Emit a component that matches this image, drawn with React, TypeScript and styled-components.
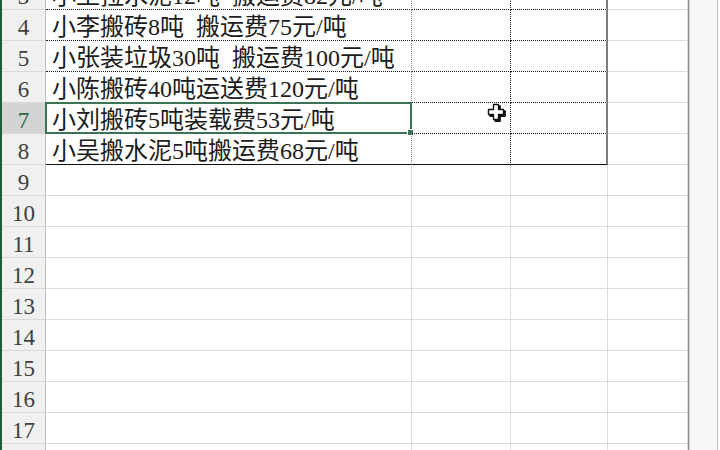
import React from 'react';
import styled, { createGlobalStyle, css } from 'styled-components';

const GlobalStyle = createGlobalStyle`
  html, body { margin: 0; padding: 0; background: #ffffff; overflow: hidden; }
  #root { width: 720px; height: 450px; }
`;

const GREEN = '#3b7454';

const Window = styled.div`
  display: flex;
  width: 720px;
  height: 450px;
  overflow: hidden;
  background: #ffffff;
`;

const EdgeStrip = styled.div`
  flex: none;
  width: 2px;
  background: #1f5c3b;
`;

const Sheet = styled.div`
  flex: none;
  width: 686px;
  height: 450px;
  overflow: hidden;
`;

const Rows = styled.div`
  display: flex;
  flex-direction: column;
  margin-top: -21px;
`;

const Row = styled.div`
  flex: none;
  display: grid;
  grid-template-columns: 44px 366px 99px 97px 80px;
  height: 31px;
`;

const RowHeader = styled.div<{ $active?: boolean }>`
  box-sizing: border-box;
  display: flex;
  align-items: center;
  justify-content: center;
  padding-top: 4px;
  background: ${(p) => (p.$active ? '#d4d4d4' : '#f0f0f0')};
  color: ${(p) => (p.$active ? '#2a6a47' : '#404040')};
  border-bottom: 1px solid #d9d9d9;
  border-right: 1px solid #bdbdbd;
  font-family: 'Liberation Serif', 'Times New Roman', serif;
  font-size: 23px;
  line-height: 1;
`;

type Bottom = 'dotted' | 'solid' | 'grid';
type Right = 'pagebreak' | 'dotted' | 'edge' | 'grid';

const bottomStyles: Record<Bottom, ReturnType<typeof css>> = {
  dotted: css`border-bottom: 1px dotted #1a1a1a;`,
  solid: css`border-bottom: 1px solid #111111;`,
  grid: css`border-bottom: 1px solid #dcdcdc;`,
};

const rightStyles: Record<Right, ReturnType<typeof css>> = {
  pagebreak: css`border-right: 1px dotted #8c8c8c;`,
  dotted: css`border-right: 1px dotted #1a1a1a;`,
  edge: css`border-right: 2px solid #7d7d7d;`,
  grid: css`border-right: 1px solid #dcdcdc;`,
};

const Cell = styled.div<{ $bottom: Bottom; $right: Right }>`
  position: relative;
  box-sizing: border-box;
  display: flex;
  align-items: center;
  padding: 3px 0 0 6px;
  white-space: nowrap;
  font-family: 'Liberation Serif', 'Noto Sans CJK SC', serif;
  font-size: 24px;
  line-height: 1;
  word-spacing: 6px;
  color: #1c1c1c;
  ${(p) => bottomStyles[p.$bottom]}
  ${(p) => rightStyles[p.$right]}
`;

const Selection = styled.div`
  position: absolute;
  left: -1px;
  top: -1px;
  right: -1px;
  bottom: -1px;
  border: 2px solid ${GREEN};
  pointer-events: none;
`;

const FillHandle = styled.div`
  position: absolute;
  right: -4px;
  bottom: -4px;
  width: 5px;
  height: 5px;
  background: ${GREEN};
  border: 1px solid #ffffff;
`;

const CursorWrap = styled.div`
  position: absolute;
  left: 74px;
  top: -1px;
  width: 22px;
  height: 22px;
`;

const ScrollTrack = styled.div`
  flex: none;
  width: 32px;
  box-sizing: border-box;
  display: flex;
  border-left: 1px solid #8f8f8f;
`;

const TrackInner = styled.div`
  flex: 1;
  border-left: 1px solid #cfcfcf;
  border-right: 1px solid #c2c2c2;
  background: #f8f8f8;
  margin-right: 2px;
`;

const texts: Record<number, string> = {
  3: '小王拉水泥12吨 搬运费82元/吨',
  4: '小李搬砖8吨 搬运费75元/吨',
  5: '小张装垃圾30吨 搬运费100元/吨',
  6: '小陈搬砖40吨运送费120元/吨',
  7: '小刘搬砖5吨装载费53元/吨',
  8: '小吴搬水泥5吨搬运费68元/吨',
};

const CrossCursor = () => (
  <CursorWrap>
    <svg width="22" height="22" viewBox="0 0 22 22">
      <path
        d="M7.5 2.5h5v5h5v5h-5v5h-5v-5h-5v-5h5z"
        transform="translate(1.6 1.6)"
        fill="#111"
        stroke="#111"
        strokeWidth="1.6"
        strokeLinejoin="round"
      />
      <path
        d="M7.5 2.5h5v5h5v5h-5v5h-5v-5h-5v-5h5z"
        fill="#ffffff"
        stroke="#111"
        strokeWidth="1.4"
        strokeLinejoin="round"
      />
    </svg>
  </CursorWrap>
);

export default function App() {
  const rows = Array.from({ length: 16 }, (_, i) => i + 3);
  return (
    <>
      <GlobalStyle />
      <Window>
        <EdgeStrip />
        <Sheet>
          <Rows>
            {rows.map((r) => {
              const inTable = r <= 8;
              const bottom: Bottom = inTable ? (r === 8 ? 'solid' : 'dotted') : 'grid';
              return (
                <Row key={r}>
                  <RowHeader $active={r === 7}>{r}</RowHeader>
                  <Cell $bottom={bottom} $right={inTable ? 'pagebreak' : 'grid'}>
                    {texts[r]}
                    {r === 7 && (
                      <Selection>
                        <FillHandle />
                      </Selection>
                    )}
                  </Cell>
                  <Cell $bottom={bottom} $right={inTable ? 'dotted' : 'grid'}>
                    {r === 7 && <CrossCursor />}
                  </Cell>
                  <Cell $bottom={bottom} $right={inTable ? 'edge' : 'grid'} />
                  <Cell $bottom="grid" $right="grid" />
                </Row>
              );
            })}
          </Rows>
        </Sheet>
        <ScrollTrack>
          <TrackInner />
        </ScrollTrack>
      </Window>
    </>
  );
}
